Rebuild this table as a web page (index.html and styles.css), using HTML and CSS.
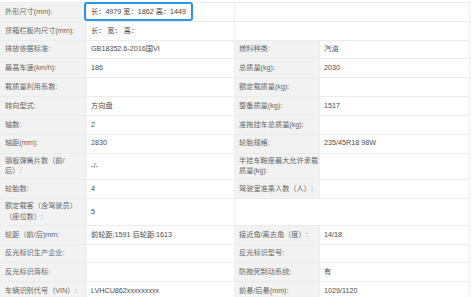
FILE: index.html
```html
<!DOCTYPE html>
<html lang="zh">
<head>
<meta charset="utf-8">
<link rel="stylesheet" href="styles.css">
</head>
<body>
<div class="spec">
  <div class="c lab">外形尺寸(mm):</div>
  <div class="c val"><span class="hl">长：4979 宽：1862 高：1449</span></div>
  <div class="c val span2"></div>

  <div class="c lab">货箱栏板内尺寸(mm):</div>
  <div class="c val">长：&nbsp;宽：&nbsp;高：</div>
  <div class="c val span2"></div>

  <div class="c lab">排放依据标准:</div>
  <div class="c val">GB18352.6-2016国VI</div>
  <div class="c lab r">燃料种类:</div>
  <div class="c val">汽油</div>

  <div class="c lab">最高车速(km/h):</div>
  <div class="c val">186</div>
  <div class="c lab r">总质量(kg):</div>
  <div class="c val">2030</div>

  <div class="c lab">载质量利用系数:</div>
  <div class="c val"></div>
  <div class="c lab r">额定载质量(kg):</div>
  <div class="c val"></div>

  <div class="c lab">转向型式:</div>
  <div class="c val">方向盘</div>
  <div class="c lab r">整备质量(kg):</div>
  <div class="c val">1517</div>

  <div class="c lab">轴数:</div>
  <div class="c val">2</div>
  <div class="c lab r">准拖挂车总质量(kg):</div>
  <div class="c val"></div>

  <div class="c lab">轴距(mm):</div>
  <div class="c val">2830</div>
  <div class="c lab r">轮胎规格:</div>
  <div class="c val">235/45R18 98W</div>

  <div class="c lab">钢板弹簧片数（前/<br>后）:</div>
  <div class="c val">-/-</div>
  <div class="c lab r">半挂车鞍座最大允许承载<br>质量(kg):</div>
  <div class="c val"></div>

  <div class="c lab">轮胎数:</div>
  <div class="c val">4</div>
  <div class="c lab r">驾驶室准乘人数（人）:</div>
  <div class="c val"></div>

  <div class="c lab">额定载客（含驾驶员）<br>（座位数）:</div>
  <div class="c val">5</div>
  <div class="c val span2"></div>

  <div class="c lab">轮距（前/后)mm:</div>
  <div class="c val">前轮距:1591 后轮距:1613</div>
  <div class="c lab r">接近角/离去角（度）:</div>
  <div class="c val">14/18</div>

  <div class="c lab">反光标识生产企业:</div>
  <div class="c val"></div>
  <div class="c lab r">反光标识型号:</div>
  <div class="c val"></div>

  <div class="c lab">反光标识商标:</div>
  <div class="c val"></div>
  <div class="c lab r">防抱死制动系统:</div>
  <div class="c val">有</div>

  <div class="c lab">车辆识别代号（VIN）:</div>
  <div class="c val">LVHCU862xxxxxxxxx</div>
  <div class="c lab r">前悬/后悬(mm):</div>
  <div class="c val">1029/1120</div>
</div>
</body>
</html>
```
FILE: styles.css
```css
html, body {
  margin: 0;
  padding: 0;
  background: #ffffff;
}
body {
  font-family: "Liberation Sans", "Noto Sans CJK SC", sans-serif;
  font-size: 7.2px;
  color: #555;
  overflow: hidden;
  height: 297px;
}
.spec {
  margin-top: 2px;
  width: 470px;
  display: grid;
  grid-template-columns: 87px 148px 85px 150px;
  grid-template-rows: repeat(8, 18.84px) 26.6px 18.4px 27.3px repeat(4, 18.7px);
  border-top: 1px solid #ececec;
  border-right: 1px solid #e6e6e6;
  box-sizing: border-box;
}
.c {
  box-sizing: border-box;
  border-bottom: 1px solid #ebebeb;
  border-right: 1px solid #efefef;
  display: flex;
  align-items: center;
  line-height: 1.45;
  white-space: nowrap;
  overflow: hidden;
}
.lab {
  background: #f2f2f2;
  color: #666;
  padding-left: 5px;
}
.lab.r {
  padding-left: 4px;
}
.val {
  background: #fff;
  color: #4a4a4a;
  padding-left: 4px;
}
.span2 {
  grid-column: span 2;
}
.hl {
  display: inline-block;
  border: 2px solid #2b95e9;
  border-radius: 3px;
  padding: 2px 5px 2px 5px;
  margin-left: -7px;
  color: #444;
  line-height: 11px;
}
.val:has(.hl) {
  overflow: visible;
}
```
